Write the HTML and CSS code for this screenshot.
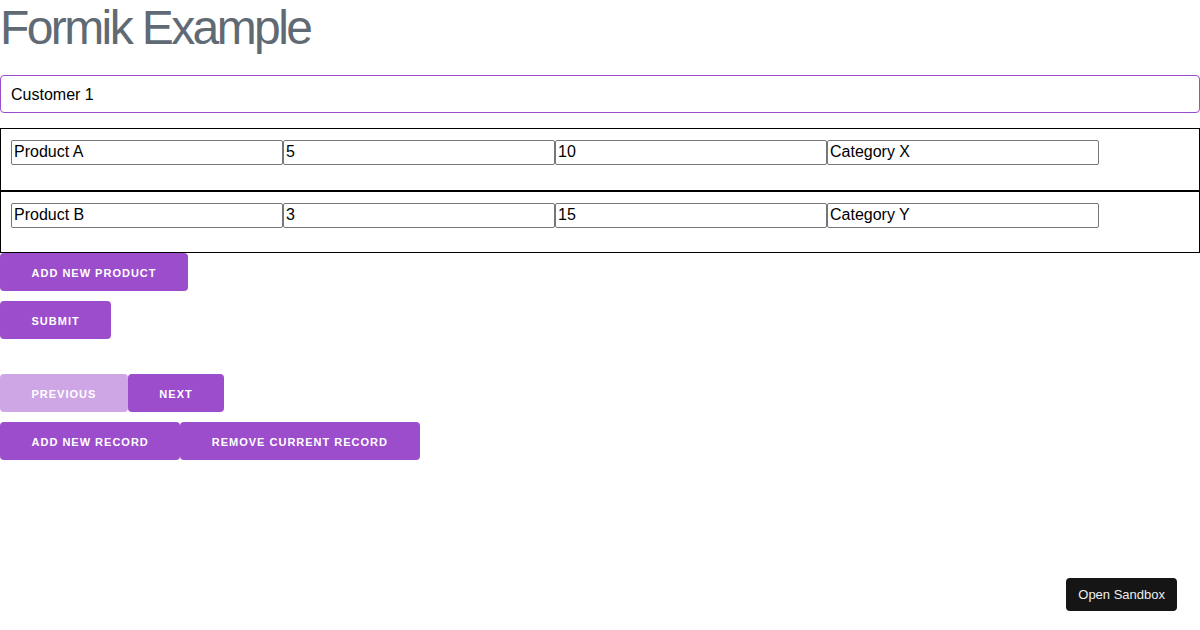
FILE: index.html
```html
<!DOCTYPE html>
<html lang="en">
<head>
  <meta charset="UTF-8">
  <meta name="viewport" content="width=device-width, initial-scale=1.0">
  <title>Formik Example</title>
  <link rel="stylesheet" href="styles.css">
</head>
<body>
  <div class="app">
    <h1 class="title">Formik Example</h1>

    <form class="record-form">
      <input class="customer-input" type="text" name="customer" value="Customer 1">

      <!-- Product rows -->
      <div class="products">
        <div class="product-row">
          <input class="field" type="text" value="Product A">
          <input class="field" type="text" value="5">
          <input class="field" type="text" value="10">
          <input class="field" type="text" value="Category X">
        </div>
        <div class="product-row">
          <input class="field" type="text" value="Product B">
          <input class="field" type="text" value="3">
          <input class="field" type="text" value="15">
          <input class="field" type="text" value="Category Y">
        </div>
      </div>

      <div class="stack">
        <button type="button" class="btn">Add New Product</button>
        <button type="submit" class="btn">Submit</button>
      </div>
    </form>

    <!-- Record navigation -->
    <div class="nav">
      <div class="btn-row">
        <button type="button" class="btn" disabled>Previous</button>
        <button type="button" class="btn">Next</button>
      </div>
      <div class="btn-row">
        <button type="button" class="btn">Add New Record</button>
        <button type="button" class="btn">Remove Current Record</button>
      </div>
    </div>
  </div>

  <a class="sandbox-link" href="#">Open Sandbox</a>
</body>
</html>
```

FILE: styles.css
```css
/* General Reset */
* {
  margin: 0;
  padding: 0;
  box-sizing: border-box;
}

body {
  font-family: "Liberation Sans", Arial, sans-serif;
  background: #fff;
  color: #000;
}

.title {
  font-size: 48px;
  font-weight: 400;
  letter-spacing: -2.6px;
  line-height: 1;
  color: #5f6a74;
  padding-top: 4px;
  height: 75px;
}

/* Customer input */
.customer-input {
  display: block;
  width: 100%;
  height: 38px;
  padding: 2px 10px 0;
  border: 1px solid #9c4dcc;
  border-radius: 4px;
  font-family: inherit;
  font-size: 16px;
  color: #000;
  outline: none;
}

/* Product rows */
.products {
  margin-top: 15px;
}

.product-row {
  display: flex;
  height: 63px;
  padding: 11px 10px 0;
  border: 1px solid #000;
}

.product-row + .product-row {
  height: 62px;
}

.field {
  width: 272px;
  height: 25px;
  padding: 0 2px 2px;
  border: 1px solid #767676;
  border-radius: 2px;
  font-family: inherit;
  font-size: 16px;
  color: #000;
}

/* Buttons */
.btn {
  height: 38px;
  padding: 2px 31.5px 0;
  border: none;
  border-radius: 4px;
  background: #9c4dcc;
  color: #fff;
  font-family: inherit;
  font-size: 11px;
  font-weight: 700;
  letter-spacing: 1px;
  text-transform: uppercase;
  cursor: pointer;
}

.btn:disabled {
  background: #cea6e5;
  cursor: default;
}

.stack {
  display: flex;
  flex-direction: column;
  align-items: flex-start;
  gap: 10px;
}

.nav {
  display: flex;
  flex-direction: column;
  gap: 10px;
  margin-top: 35px;
}

.btn-row {
  display: flex;
}

/* Floating link */
.sandbox-link {
  position: fixed;
  right: 23px;
  bottom: 19px;
  padding: 9px 12px;
  background: #151515;
  border-radius: 4px;
  color: #eee;
  font-family: "Liberation Sans", Arial, sans-serif;
  font-size: 13px;
  text-decoration: none;
  line-height: 15px;
}
```
